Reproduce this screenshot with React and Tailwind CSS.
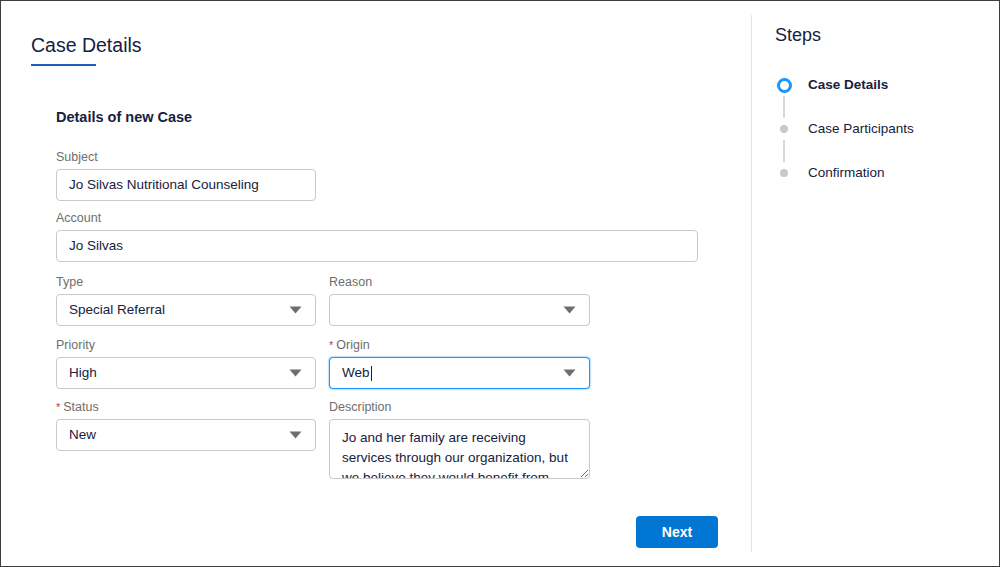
import { useState } from "react";

const TEXT = "text-[#16213e]";

function Label({ children, required }) {
  return (
    <div className="text-[12.5px] leading-[18px] text-[#706e6b] mb-[3px] flex items-center">
      {required && <span className="text-[#c23934] mr-[3px] text-[11px]">*</span>}
      {children}
    </div>
  );
}

function Caret() {
  return (
    <svg width="13" height="8" viewBox="0 0 13 8" className="shrink-0">
      <path d="M0.5 0.5 H12.5 L6.5 7.5 Z" fill="#706e6b" />
    </svg>
  );
}

function Select({ value, focused }) {
  return (
    <div
      className={`h-[32px] rounded-[4px] border bg-white pl-[12px] pr-[13px] flex items-center justify-between ${
        focused ? "border-[#1b96ff] shadow-[0_0_2px_#1b96ff]" : "border-[#c9c9c9]"
      }`}
    >
      <span className={`text-[13.5px] ${TEXT} flex items-center`}>
        {value}
        {focused && <span className="inline-block w-px h-[15px] bg-[#16213e] ml-[1px]" />}
      </span>
      <Caret />
    </div>
  );
}

function Input({ value }) {
  return (
    <div className={`h-[32px] rounded-[4px] border border-[#c9c9c9] bg-white px-[12px] flex items-center text-[13.5px] ${TEXT}`}>
      {value}
    </div>
  );
}

const STEPS = ["Case Details", "Case Participants", "Confirmation"];

export default function App() {
  const [desc] = useState(
    "Jo and her family are receiving services through our organization, but we believe they would benefit from additional nutritional counseling."
  );

  return (
    <div
      className="w-[1000px] h-[567px] border border-[#3d3d3d] bg-white flex overflow-hidden"
      style={{ fontFamily: '"Liberation Sans", Arial, sans-serif' }}
    >
      {/* Main form */}
      <div className="w-[750px] shrink-0 flex flex-col pt-[30px] pl-[30px] pr-[33px]">
        <div className={`text-[19.5px] leading-[28px] font-light ${TEXT}`}>Case Details</div>
        <div className="w-[65px] h-[2px] bg-[#1b5fc1] mt-[5px]" />

        <div className="pl-[25px] mt-[41px]">
          <div className={`text-[14.5px] leading-[20px] font-bold ${TEXT}`}>Details of new Case</div>

          <div className="mt-[21px] w-[260px]">
            <Label>Subject</Label>
            <Input value="Jo Silvas Nutritional Counseling" />
          </div>

          <div className="mt-[8px] w-[642px]">
            <Label>Account</Label>
            <Input value="Jo Silvas" />
          </div>

          <div className="mt-[11px] flex gap-[13px]">
            <div className="w-[260px]">
              <Label>Type</Label>
              <Select value="Special Referral" />
            </div>
            <div className="w-[261px]">
              <Label>Reason</Label>
              <Select value="" />
            </div>
          </div>

          <div className="mt-[10px] flex gap-[13px]">
            <div className="w-[260px]">
              <Label>Priority</Label>
              <Select value="High" />
            </div>
            <div className="w-[261px]">
              <Label required>Origin</Label>
              <Select value="Web" focused />
            </div>
          </div>

          <div className="mt-[9px] flex gap-[13px] items-start">
            <div className="w-[260px]">
              <Label required>Status</Label>
              <Select value="New" />
            </div>
            <div className="w-[261px]">
              <Label>Description</Label>
              <textarea
                readOnly
                value={desc}
                className={`block w-full h-[60px] rounded-[4px] border border-[#c9c9c9] px-[12px] pt-[8px] text-[13.5px] leading-[20px] ${TEXT} overflow-hidden resize-y outline-none`}
                style={{ fontFamily: '"Liberation Sans", Arial, sans-serif' }}
              />
            </div>
          </div>
        </div>

        <div className="flex justify-end mt-[37px]">
          <button className="w-[82px] h-[32px] rounded-[4px] bg-[#0176d3] text-white text-[14px] font-bold">
            Next
          </button>
        </div>
      </div>

      {/* Steps */}
      <div className="flex-1 my-[14px] border-l border-[#e5e5e5] pl-[23px] pt-[8px]">
        <div className={`text-[18px] leading-[24px] ${TEXT}`}>Steps</div>
        <div className="mt-[29px] flex flex-col">
          {STEPS.map((s, i) => (
            <div key={s} className="flex flex-col">
              <div className="flex items-center h-[18px]">
                <div className="w-[18px] flex justify-center">
                  {i === 0 ? (
                    <div className="w-[15px] h-[15px] rounded-full border-[3px] border-[#1b96ff] bg-white" />
                  ) : (
                    <div className="w-[8px] h-[8px] rounded-full bg-[#c9c9c9]" />
                  )}
                </div>
                <span className={`ml-[15px] text-[13.5px] ${TEXT} ${i === 0 ? "font-bold" : ""}`}>{s}</span>
              </div>
              {i < STEPS.length - 1 && (
                <div className="w-[18px] flex justify-center py-[2px]">
                  <div className="w-[2px] h-[22px] bg-[#d8d8d8]" />
                </div>
              )}
            </div>
          ))}
        </div>
      </div>
    </div>
  );
}
